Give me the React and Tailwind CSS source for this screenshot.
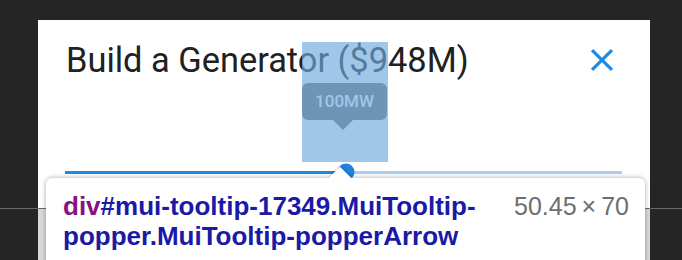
import React from "react";

export default function App() {
  return (
    <div className="relative h-[260px] w-[682px] overflow-hidden bg-[#252525]">
      {/* dialog */}
      <div className="ml-[38px] pt-[20px]">
        <div className="flex h-[188px] w-[612px] flex-col bg-white">
          <div className="mt-[20px] flex h-[40px] items-center justify-between pl-[28px] pr-[29px]">
            <span
              className="text-[34.4px] leading-[40px] text-[#212121]"
              style={{ fontFamily: "Roboto, sans-serif" }}
            >
              Build a Generator ($948M)
            </span>
            <svg
              width="38"
              height="38"
              viewBox="0 0 24 24"
              className="flex-none fill-[#1e88e5]"
            >
              <path d="M19 6.41L17.59 5 12 10.59 6.41 5 5 6.41 10.59 12 5 17.59 6.41 19 12 13.41 17.59 19 19 17.59 13.41 12z" />
            </svg>
          </div>
          {/* slider */}
          <div className="mt-[82px] flex h-[20px] items-center pl-[27px] pr-[28px]">
            <div className="relative flex h-[3px] w-full">
              <div className="h-full w-[50.4%] bg-[#1e88e5]" />
              <div className="h-full flex-1 bg-[#aad0f3]" />
              <div className="absolute left-[50.4%] top-1/2 h-[17px] w-[17px] -translate-x-1/2 -translate-y-1/2 rounded-full bg-[#1f82dc]" />
            </div>
          </div>
        </div>
      </div>
      <div className="h-[1px] w-full bg-[#6a6a6a]" />
      <div className="ml-[38px] h-[60px] w-[612px] bg-[#d8d8d8]" />

      {/* MUI tooltip */}
      <div
        className="absolute left-[302px] top-[83px] flex h-[37px] w-[85px] items-center justify-center rounded-[6px] bg-[rgba(97,97,97,0.92)] text-[17px] font-medium text-white"
        style={{ fontFamily: "Roboto, sans-serif" }}
      >
        100MW
      </div>
      <div className="absolute left-[333px] top-[120px] h-0 w-0 border-l-[10px] border-r-[10px] border-t-[10px] border-l-transparent border-r-transparent border-t-[rgba(97,97,97,0.92)]" />

      {/* devtools highlight */}
      <div className="absolute left-[302px] top-[42px] h-[120px] w-[86px] bg-[rgba(111,168,220,0.66)]" />

      {/* devtools info card */}
      <div
        className="absolute left-[46px] top-[178px] flex h-[110px] w-[599px] items-start justify-between rounded-[6px] bg-white pl-[17px] pr-[16px] pt-[13px] shadow-[0_0_5px_rgba(0,0,0,0.35)]"
        style={{ fontFamily: "'Liberation Sans', Arial, sans-serif" }}
      >
        <div className="text-[26px] font-bold leading-[30px] text-[#1a1aa6]">
          <span className="text-[#881280]">div</span>#mui-tooltip-17349.MuiTooltip-
          <br />
          popper.MuiTooltip-popperArrow
        </div>
        <div className="flex-none text-[25px] leading-[30px] text-[#6e6e6e]">
          50.45{"\u2009"}×{"\u2009"}70
        </div>
      </div>
      <div className="absolute left-[332px] top-[170px] h-[16px] w-[16px] rotate-45 bg-white shadow-[-1px_-1px_2px_rgba(0,0,0,0.15)]" />
    </div>
  );
}
